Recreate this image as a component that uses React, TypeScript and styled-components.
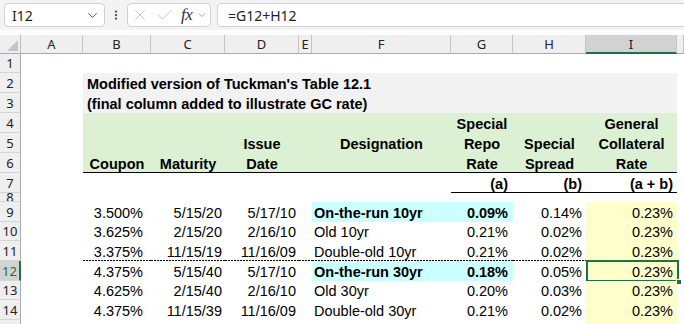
import React from 'react';
import styled, { createGlobalStyle, css } from 'styled-components';
import { ChevronDown, X, Check, EllipsisVertical } from 'lucide-react';

const GlobalStyle = createGlobalStyle`
  html, body { margin: 0; padding: 0; background: #ffffff; }
  body {
    width: 684px; height: 324px; overflow: hidden;
    font-family: "Liberation Sans", Arial, sans-serif;
  }
`;

const UI_FONT = `"Noto Sans", "Open Sans", sans-serif`;

/* ---------- formula bar ---------- */
const Toolbar = styled.div`
  display: flex;
  align-items: center;
  height: 30px;
  padding: 0 0 0 4px;
  background: #f3f3f3;
  box-sizing: border-box;
  overflow: hidden;
`;

const Box = styled.div<{ $w?: number; $grow?: boolean; $ml?: number }>`
  display: flex;
  align-items: center;
  height: 24px;
  box-sizing: border-box;
  background: #ffffff;
  border: 1px solid #d1d1d1;
  border-radius: 4px;
  margin-left: ${(p) => p.$ml ?? 0}px;
  ${(p) => (p.$w ? `width: ${p.$w}px; flex: none;` : '')}
  ${(p) => (p.$grow ? 'flex: 1; margin-right: -10px;' : '')}
`;

const NameText = styled.span`
  font-family: ${UI_FONT};
  font-size: 14px;
  color: #222;
  padding-left: 7px;
  flex: 1;
`;

const FormulaText = styled.span`
  font-family: ${UI_FONT};
  font-size: 14px;
  color: #222;
  padding-left: 10px;
`;

const Dots = styled.div`
  display: flex;
  align-items: center;
  justify-content: center;
  width: 12px;
  margin-left: 5px;
  color: #444;
`;

const FxGroup = styled.div`
  display: flex;
  align-items: center;
  padding-left: 3px;
`;

const Fx = styled.span`
  font-family: "Liberation Serif", serif;
  font-style: italic;
  font-size: 17px;
  color: #333;
  margin-left: 6px;
  margin-right: 4px;
  letter-spacing: -0.5px;
`;

const Gap = styled.div`
  height: 5px;
  background: #ffffff;
`;

/* ---------- sheet ---------- */
const COL_W = [21, 62, 68, 74, 74, 13, 139, 62, 73, 91];
const ROW_H = [19, 20, 20, 20, 20, 20, 20, 9, 20, 19, 20, 20, 19, 20, 20];

const Sheet = styled.div`
  display: grid;
  grid-template-columns: ${COL_W.map((w) => `${w}px`).join(' ')} 1fr;
  grid-template-rows: 19px ${ROW_H.map((h) => `${h}px`).join(' ')};
`;

const Corner = styled.div`
  position: relative;
  background: #efefef;
  border-right: 1px solid #bdbdbd;
  border-bottom: 1px solid #a9a9a9;
  box-sizing: border-box;
  &::after {
    content: '';
    position: absolute;
    right: 2px;
    bottom: 2px;
    width: 0;
    height: 0;
    border-left: 11px solid transparent;
    border-bottom: 11px solid #c4c4c4;
  }
`;

const ColHead = styled.div<{ $sel?: boolean }>`
  display: flex;
  align-items: center;
  justify-content: center;
  font-family: ${UI_FONT};
  font-size: 13px;
  color: #222;
  box-sizing: border-box;
  background: ${(p) => (p.$sel ? '#d2d2d2' : '#efefef')};
  border-right: 1px solid #c4c4c4;
  border-bottom: ${(p) => (p.$sel ? '2px solid #1e7145' : '1px solid #a9a9a9')};
  padding-top: ${(p) => (p.$sel ? '1px' : '0')};
  overflow: hidden;
`;

const RowHead = styled.div<{ $sel?: boolean }>`
  display: flex;
  align-items: center;
  justify-content: center;
  font-family: ${UI_FONT};
  font-size: 13px;
  color: ${(p) => (p.$sel ? '#1e6b43' : '#222')};
  box-sizing: border-box;
  background: ${(p) => (p.$sel ? '#d2d2d2' : '#efefef')};
  border-right: ${(p) => (p.$sel ? '2px solid #1e7145' : '1px solid #a9a9a9')};
  border-bottom: 1px solid #d4d4d4;
  overflow: hidden;
  line-height: 18px;
`;

type Line = 'solid' | 'dotted' | undefined;

const Cell = styled.div<{
  $bg?: string;
  $align?: 'left' | 'right' | 'center';
  $bold?: boolean;
  $line?: Line;
  $pad?: number;
  $span?: number;
  $sel?: boolean;
}>`
  position: relative;
  display: flex;
  align-items: flex-end;
  justify-content: ${(p) =>
    p.$align === 'right' ? 'flex-end' : p.$align === 'center' ? 'center' : 'flex-start'};
  padding: 0 ${(p) => (p.$align === 'right' ? p.$pad ?? 3 : 0)}px 1px
    ${(p) => (p.$align === 'left' || !p.$align ? p.$pad ?? 2 : 0)}px;
  box-sizing: border-box;
  font-size: 14.5px;
  line-height: 16px;
  color: #000;
  white-space: nowrap;
  font-weight: ${(p) => (p.$bold ? 700 : 400)};
  background-color: ${(p) => p.$bg ?? 'transparent'};
  ${(p) => (p.$span ? `grid-column: span ${p.$span};` : '')}
  ${(p) =>
    p.$line === 'solid' &&
    css`
      background-image: linear-gradient(#000, #000);
      background-repeat: no-repeat;
      background-size: 100% 1px;
      background-position: left bottom;
    `}
  ${(p) =>
    p.$line === 'dotted' &&
    css`
      background-image: repeating-linear-gradient(to right, #000 0 2px, transparent 2px 3px);
      background-repeat: no-repeat;
      background-size: 100% 1px;
      background-position: left bottom;
    `}
  ${(p) =>
    p.$sel &&
    css`
      &::before {
        content: '';
        position: absolute;
        left: 0;
        top: -1px;
        right: -2px;
        bottom: -1px;
        border: 2px solid #1e7145;
        pointer-events: none;
      }
      &::after {
        content: '';
        position: absolute;
        right: -5px;
        bottom: -4px;
        width: 6px;
        height: 6px;
        background: #1e7145;
        border: 1px solid #fff;
        box-sizing: border-box;
      }
    `}
`;

/* ---------- data ---------- */
const GREY = '#f2f2f2';
const GREEN = '#dcf0d4';
const CYAN = '#ccffff';
const YELLOW = '#ffffcc';

type CellSpec = {
  text?: string;
  bg?: string;
  align?: 'left' | 'right' | 'center';
  bold?: boolean;
  line?: Line;
  pad?: number;
  span?: number;
  sel?: boolean;
};

const COLS = ['A', 'B', 'C', 'D', 'E', 'F', 'G', 'H', 'I'];

const headerRow = (texts: string[], line?: Line): CellSpec[] => [
  {},
  ...texts.map((t) => ({ text: t, bg: GREEN, align: 'center' as const, bold: true, line })),
  {},
];

const dataRows: [string, string, string, string, string, string, string, boolean][] = [
  ['3.500%', '5/15/20', '5/17/10', 'On-the-run 10yr', '0.09%', '0.14%', '0.23%', true],
  ['3.625%', '2/15/20', '2/16/10', 'Old 10yr', '0.21%', '0.02%', '0.23%', false],
  ['3.375%', '11/15/19', '11/16/09', 'Double-old 10yr', '0.21%', '0.02%', '0.23%', false],
  ['4.375%', '5/15/40', '5/17/10', 'On-the-run 30yr', '0.18%', '0.05%', '0.23%', true],
  ['4.625%', '2/15/40', '2/16/10', 'Old 30yr', '0.20%', '0.03%', '0.23%', false],
  ['4.375%', '11/15/39', '11/16/09', 'Double-old 30yr', '0.21%', '0.02%', '0.23%', false],
];

const rows: CellSpec[][] = [
  Array.from({ length: 10 }, () => ({})),
  [{}, { text: "Modified version of Tuckman's Table 12.1", bg: GREY, bold: true, span: 8, pad: 4 }, {}],
  [{}, { text: '(final column added to illustrate GC rate)', bg: GREY, bold: true, span: 8, pad: 4 }, {}],
  headerRow(['', '', '', '', '', 'Special', '', 'General']),
  headerRow(['', '', 'Issue', '', 'Designation', 'Repo', 'Special', 'Collateral']),
  headerRow(['Coupon', 'Maturity', 'Date', '', '', 'Rate', 'Spread', 'Rate'], 'solid'),
  [
    {}, {}, {}, {}, {}, {},
    { text: '(a)', align: 'right', bold: true, line: 'solid', pad: 5 },
    { text: '(b)', align: 'right', bold: true, line: 'solid', pad: 4 },
    { text: '(a + b)', align: 'right', bold: true, line: 'solid', pad: 4 },
    {},
  ],
  Array.from({ length: 10 }, () => ({})),
  ...dataRows.map(([cpn, mat, iss, des, g, h, i, hi], idx): CellSpec[] => {
    const line: Line = idx === 2 ? 'dotted' : undefined;
    return [
      {},
      { text: cpn, align: 'right', pad: 8, line },
      { text: mat, align: 'right', pad: 3, line },
      { text: iss, align: 'right', pad: 3, line },
      { line },
      { text: des, bold: hi, bg: hi ? CYAN : undefined, pad: 2, line },
      { text: g, align: 'right', bold: hi, bg: hi ? CYAN : undefined, pad: 5, line },
      { text: h, align: 'right', pad: 4, line },
      { text: i, align: 'right', bg: YELLOW, pad: 4, sel: idx === 3 },
      {},
    ];
  }),
  [{}, {}, {}, {}, {}, {}, {}, {}, { bg: YELLOW }, {}],
];

// rows whose number is hidden below the window edge
const VISIBLE_NUMBERS = 14;

export default function App() {
  return (
    <>
      <GlobalStyle />
      <Toolbar>
        <Box $w={101}>
          <NameText>I12</NameText>
          <ChevronDown size={15} strokeWidth={1.5} color="#444" style={{ marginRight: 4 }} />
        </Box>
        <Dots>
          <EllipsisVertical size={14} strokeWidth={2.5} />
        </Dots>
        <Box $w={84} $ml={5}>
          <FxGroup>
            <X size={18} strokeWidth={1} color="#b5b5b5" />
            <Check size={20} strokeWidth={1} color="#b5b5b5" style={{ marginLeft: 6 }} />
            <Fx>fx</Fx>
            <ChevronDown size={12} strokeWidth={1.5} color="#888" />
          </FxGroup>
        </Box>
        <Box $grow $ml={6}>
          <FormulaText>=G12+H12</FormulaText>
        </Box>
      </Toolbar>
      <Gap />
      <Sheet>
        <Corner />
        {COLS.map((c) => (
          <ColHead key={c} $sel={c === 'I'}>
            {c}
          </ColHead>
        ))}
        <ColHead />
        {rows.map((r, ri) => (
          <React.Fragment key={ri}>
            <RowHead $sel={ri + 1 === 12}>{ri + 1 <= VISIBLE_NUMBERS ? ri + 1 : ''}</RowHead>
            {r.map((c, ci) => (
              <Cell
                key={ci}
                $bg={c.bg}
                $align={c.align}
                $bold={c.bold}
                $line={c.line}
                $pad={c.pad}
                $span={c.span}
                $sel={c.sel}
              >
                {c.text}
              </Cell>
            ))}
          </React.Fragment>
        ))}
      </Sheet>
    </>
  );
}
